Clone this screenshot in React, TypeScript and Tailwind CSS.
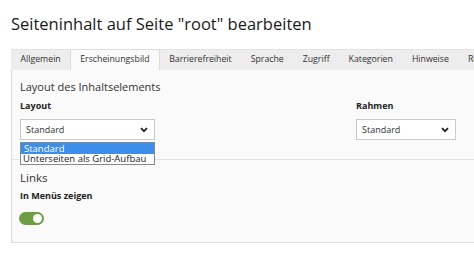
import React from "react";

const Chevron = () => (
  <svg width="8" height="6" viewBox="0 0 8 6" className="shrink-0">
    <path d="M1 1.2 L4 4.2 L7 1.2" fill="none" stroke="#222" strokeWidth="1.8" />
  </svg>
);

const Select = ({ width }: { width: string }) => (
  <div
    className={`${width} h-[21px] bg-white border border-[#c9c9c9] flex items-center justify-between pl-[5px] pr-[6px] text-[9px] text-[#333]`}
  >
    <span>Standard</span>
    <Chevron />
  </div>
);

const tabs = [
  "Allgemein",
  "Erscheinungsbild",
  "Barrierefreiheit",
  "Sprache",
  "Zugriff",
  "Kategorien",
  "Hinweise",
  "Ressourcen",
];

export default function App() {
  return (
    <div
      className="relative w-[474px] h-[274px] bg-white overflow-hidden pl-[11px]"
      style={{ fontFamily: '"Open Sans", "Noto Sans", sans-serif' }}
    >
      <h1 className="pt-[13px] h-[49px] text-[16.5px] leading-[22px] text-[#1a1a1a] whitespace-nowrap">
        Seiteninhalt auf Seite "root" bearbeiten
      </h1>
      <div className="w-[600px] h-[21px] bg-[#ededed] border-t border-[#e4e4e4] flex text-[8.75px] text-[#333] whitespace-nowrap">
        {tabs.map((t, i) => (
          <div
            key={t}
            className={
              i === 1
                ? "h-[21px] -mt-px px-[9px] flex items-center bg-[#fafafa] border-x border-t border-[#dcdcdc]"
                : "h-[20px] px-[9.5px] flex items-center"
            }
          >
            {t}
          </div>
        ))}
      </div>
      <div className="w-[600px] h-[173px] bg-[#fafafa] border border-t-0 border-[#dcdcdc] flex flex-col">
        <div className="pl-[8px] pt-[9px] h-[90px] border-b border-[#e3e3e3]">
          <div className="text-[11px] leading-[16px] text-[#333]">Layout des Inhaltselements</div>
          <div className="flex mt-[4px]">
            <div className="w-[336px] flex flex-col">
              <div className="text-[9px] leading-[14px] font-bold text-[#222]">Layout</div>
              <div className="mt-[6px]">
                <Select width="w-[135px]" />
              </div>
            </div>
            <div className="flex flex-col">
              <div className="text-[9px] leading-[14px] font-bold text-[#222]">Rahmen</div>
              <div className="mt-[6px]">
                <Select width="w-[100px]" />
              </div>
            </div>
          </div>
        </div>
        <div className="pl-[8px] pt-[10px]">
          <div className="text-[11.5px] leading-[16px] text-[#333]">Links</div>
          <div className="text-[9px] leading-[14px] font-bold text-[#222] mt-[3px]">In Menüs zeigen</div>
          <div className="mt-[9px] -ml-px w-[25px] h-[13px] rounded-full bg-[#6e9c44] flex items-center justify-end pr-[2px]">
            <div className="w-[9px] h-[9px] rounded-full bg-white" />
          </div>
        </div>
      </div>
      <div className="absolute left-[20px] top-[142px] w-[135px] h-[23px] bg-white border border-[#8a8a8a] flex flex-col text-[9.5px] leading-[10px] whitespace-nowrap">
        <div className="h-[11px] bg-[#3b8eea] text-white pl-[3px] flex items-center">Standard</div>
        <div className="h-[10px] text-[#222] pl-[2px] flex items-center">Unterseiten als Grid-Aufbau</div>
      </div>
    </div>
  );
}
